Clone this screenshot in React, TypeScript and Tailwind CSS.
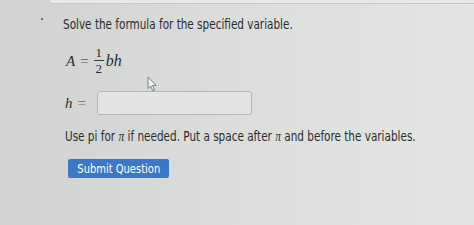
import React from 'react';

const sans = "font-['DejaVu_Sans_Condensed','DejaVu_Sans',sans-serif]";
const serif = "font-['Liberation_Serif','Times_New_Roman',serif]";

// the photo is a bit squashed sideways, so text is drawn narrower than its font
const squeeze = 'inline-block origin-left scale-x-[0.83] whitespace-nowrap';

function Cursor() {
  return (
    <svg width="11" height="16" viewBox="0 0 11 16" className="block">
      <path
        d="M1 1 L1 12.5 L3.7 10 L5.8 14.8 L7.6 14 L5.6 9.4 L9.3 9.4 Z"
        fill="#eef0ee"
        stroke="#7d817f"
        strokeWidth="1"
        strokeLinejoin="round"
      />
    </svg>
  );
}

export default function App() {
  return (
    <div className="relative w-[474px] h-[225px] overflow-hidden bg-linear-to-r from-[#cfd2d0] via-[#dcdedc] to-[#e5e6e4] text-[#2a2c2b]">
      {/* top edge of the panel */}
      <div className="ml-[50px] h-[4px] bg-[#e9eae8] border-b border-[#c4c7c5]" />

      <div className="flex">
        <div className="w-[63px] shrink-0 pl-[41px] pt-[14px]">
          <div className="w-[2px] h-[2px] rounded-full bg-[#4a4c4b]" />
        </div>

        <div className="flex flex-col min-w-0">
          <p className={`${sans} text-[14px] leading-[16px] mt-[12px]`}>
            <span className={squeeze}>Solve the formula for the specified variable.</span>
          </p>

          {/* A = 1/2 bh */}
          <div className={`${serif} flex items-center h-[28px] mt-[15px] ml-[3px] text-[15px]`}>
            <span className="italic">A</span>
            <span className="ml-[5px] text-[#5a5c5b]">=</span>
            <span className="ml-[5px] flex flex-col items-center text-[13px] leading-[12px]">
              <span>1</span>
              <span className="w-[10px] h-px bg-[#3a3c3b] mt-px" />
              <span className="mt-[2px]">2</span>
            </span>
            <span className="italic ml-[2px] text-[16px]">bh</span>
          </div>

          {/* h = [   ] */}
          <div className="flex items-center mt-[16px]">
            <span className={`${serif} italic text-[15px] ml-[2px]`}>h</span>
            <span className={`${serif} text-[15px] ml-[5px] text-[#6a6c6b]`}>=</span>
            <div className="ml-[11px] w-[155px] h-[24px] rounded-[3px] border border-[#b3b6b4] bg-[#e3e5e3]" />
          </div>

          <p className={`${sans} text-[14px] leading-[16px] mt-[13px] ml-[2px]`}>
            <span className={squeeze}>
              Use pi for <span className={`${serif} italic`}>π</span> if needed. Put a space after{' '}
              <span className={`${serif} italic`}>π</span> and before the variables.
            </span>
          </p>

          <button
            type="button"
            className={`${sans} self-start mt-[14px] ml-[5px] w-[101px] h-[19px] rounded-[2px] bg-[#3b78c8] text-white text-[13px] leading-[19px] flex justify-center`}
          >
            <span className="inline-block scale-x-[0.85] whitespace-nowrap">Submit Question</span>
          </button>
        </div>
      </div>

      <div className="absolute left-[147px] top-[76px]">
        <Cursor />
      </div>
    </div>
  );
}
